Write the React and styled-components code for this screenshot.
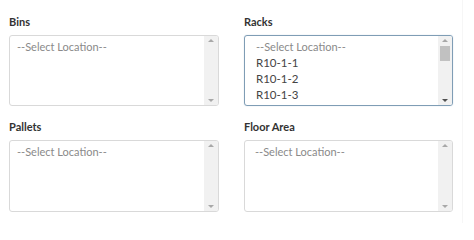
import React from 'react';
import styled, { createGlobalStyle, css } from 'styled-components';

const GlobalStyle = createGlobalStyle`
  html, body {
    margin: 0;
    padding: 0;
    background: #fff;
  }
  body {
    font-family: Lato, "Open Sans", "Liberation Sans", sans-serif;
    color: #333;
  }
`;

const Page = styled.div`
  width: 463px;
  height: 223px;
  box-sizing: border-box;
  padding: 15px 0 0 9px;
  border-right: 1px solid #f6f6f6;
`;

const FieldGrid = styled.div`
  display: grid;
  grid-template-columns: 210px 209px;
  column-gap: 25px;
  row-gap: 14px;
`;

const Field = styled.div`
  display: flex;
  flex-direction: column;
`;

const Label = styled.label`
  font-size: 11px;
  font-weight: 700;
  line-height: 14px;
  color: #333;
  margin-bottom: 6px;
`;

const ListBox = styled.div`
  height: ${p => p.$height}px;
  box-sizing: border-box;
  border: 1px solid #d9d9d9;
  border-radius: 3px;
  overflow: hidden;
  display: flex;
  ${p => p.$focused && css`
    border-color: #7f9db5;
    box-shadow: 0 0 1px rgba(102, 145, 190, 0.5);
  `}
`;

const Options = styled.ul`
  flex: 1;
  list-style: none;
  margin: 0;
  padding: 3px 0 0 ${p => p.$indent}px;
  font-size: 11px;
  line-height: 16px;
`;

const Option = styled.li`
  color: ${p => (p.$placeholder ? '#8a8a8a' : '#444')};
  white-space: nowrap;
  font-size: ${p => (p.$placeholder ? '11px' : '11.5px')};
`;

const ScrollTrack = styled.div`
  width: 14px;
  background: #f1f1f1;
  display: flex;
  flex-direction: column;
  align-items: center;
  justify-content: space-between;
  padding: 3px 0;
  box-sizing: border-box;
`;

const Arrow = styled.span`
  width: 0;
  height: 0;
  border-left: 3px solid transparent;
  border-right: 3px solid transparent;
  ${p => (p.$down
    ? css`border-top: 3px solid ${p.$active ? '#505050' : '#a8a8a8'};`
    : css`border-bottom: 3px solid ${p.$active ? '#505050' : '#a8a8a8'};`)}
`;

const Thumb = styled.div`
  width: 10px;
  height: 15px;
  background: #c1c1c1;
  margin-top: 4px;
  margin-bottom: auto;
`;

const Scrollbar = ({ scrollable }) => (
  <ScrollTrack>
    <Arrow />
    {scrollable && <Thumb />}
    <Arrow $down $active={scrollable} />
  </ScrollTrack>
);

const fields = [
  { label: 'Bins', options: [], indent: 7, height: 71 },
  { label: 'Racks', options: ['R10-1-1', 'R10-1-2', 'R10-1-3', 'R10-1-4'], indent: 11, height: 71, focused: true },
  { label: 'Pallets', options: [], indent: 7, height: 72 },
  { label: 'Floor Area', options: [], indent: 10, height: 72 },
];

export default function App() {
  return (
    <>
      <GlobalStyle />
      <Page>
        <FieldGrid>
          {fields.map(f => (
            <Field key={f.label}>
              <Label>{f.label}</Label>
              <ListBox $height={f.height} $focused={f.focused}>
                <Options $indent={f.indent}>
                  <Option $placeholder>--Select Location--</Option>
                  {f.options.map(o => (
                    <Option key={o}>{o}</Option>
                  ))}
                </Options>
                <Scrollbar scrollable={f.options.length > 0} />
              </ListBox>
            </Field>
          ))}
        </FieldGrid>
      </Page>
    </>
  );
}
